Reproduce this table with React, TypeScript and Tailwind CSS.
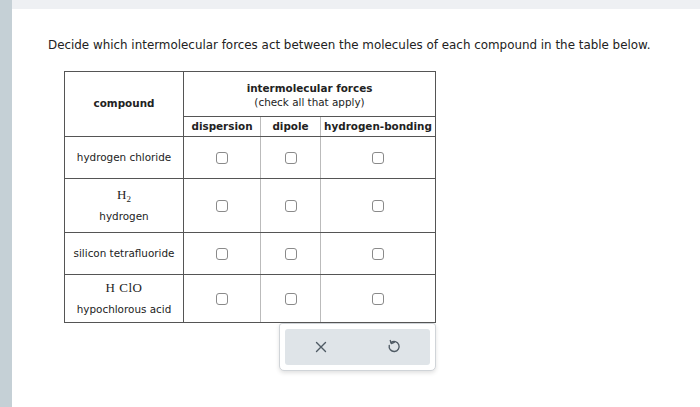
const rows = [
  { name: "hydrogen chloride" },
  { formula: "H2", name: "hydrogen" },
  { name: "silicon tetrafluoride" },
  { formula: "HClO", name: "hypochlorous acid" },
];

function Box() {
  return (
    <span className="inline-block h-[12px] w-[12px] rounded-[3px] border-[1.5px] border-[#8a8a8a] bg-white align-middle" />
  );
}

function Formula({ f }: { f: string }) {
  if (f === "H2") {
    return (
      <span className="font-['Liberation_Serif',serif] text-[13px] text-[#222]">
        H<sub className="text-[9px]">2</sub>
      </span>
    );
  }
  return (
    <span className="font-['Liberation_Serif',serif] text-[13px] tracking-[0.5px] text-[#222]">
      H ClO
    </span>
  );
}

function UndoIcon() {
  return (
    <svg width="15" height="16" viewBox="0 0 24 25" fill="none" stroke="#4f5a64" strokeWidth="2.2" strokeLinecap="round" strokeLinejoin="round">
      <path d="M8 5.5 A8 8 0 1 1 5.2 10" />
      <path d="M8 2 v5 h5" transform="rotate(-20 8 5.5)" />
    </svg>
  );
}

export default function App() {
  return (
    <div className="flex h-[407px] w-[700px] bg-white font-['DejaVu_Sans',sans-serif]">
      <div className="w-[12px] shrink-0 bg-[#c5d0d6]" />
      <div className="flex flex-1 flex-col">
        <div className="h-[9px] bg-[#eef0f3]" />
        <p className="ml-[36px] mt-[28px] text-[11.9px] text-[#222]">
          Decide which intermolecular forces act between the molecules of each compound in the table below.
        </p>

        <div className="ml-[52px] mt-[16px] flex flex-col">
          <table className="w-[372px] border-collapse text-[10.4px] text-[#222]">
            <thead>
              <tr className="h-[45px]">
                <th
                  rowSpan={2}
                  className="w-[119px] border-[1.5px] border-[#555] font-bold"
                >
                  compound
                </th>
                <th
                  colSpan={3}
                  className="border-[1.5px] border-[#555] pt-[2px] font-normal leading-[14px]"
                >
                  <div className="font-bold">intermolecular forces</div>
                  <div>(check all that apply)</div>
                </th>
              </tr>
              <tr className="h-[20px] whitespace-nowrap">
                <th className="w-[77px] border-b-[1.5px] border-b-[#555] border-r border-r-[#bbb] p-0 font-bold">
                  dispersion
                </th>
                <th className="w-[60px] border-b-[1.5px] border-b-[#555] border-r border-r-[#bbb] p-0 font-bold">
                  dipole
                </th>
                <th className="border-b-[1.5px] border-r-[1.5px] border-b-[#555] border-r-[#555] p-0 font-bold">
                  hydrogen-bonding
                </th>
              </tr>
            </thead>
            <tbody>
              {rows.map((r) => (
                <tr
                  key={r.name}
                  className={r.formula ? (r.formula === "H2" ? "h-[54px]" : "h-[48px]") : "h-[42px]"}
                >
                  <td className="whitespace-nowrap border-[1.5px] border-[#555] p-0 text-center">
                    {r.formula && (
                      <div className="mb-[6px] leading-[16px]">
                        <Formula f={r.formula} />
                      </div>
                    )}
                    <div className="leading-[14px]">{r.name}</div>
                  </td>
                  <td className="border-b-[1.5px] border-b-[#555] border-r border-r-[#bbb] p-0 text-center">
                    <Box />
                  </td>
                  <td className="border-b-[1.5px] border-b-[#555] border-r border-r-[#bbb] p-0 text-center">
                    <Box />
                  </td>
                  <td className="border-b-[1.5px] border-r-[1.5px] border-b-[#555] border-r-[#555] p-0 text-center">
                    <Box />
                  </td>
                </tr>
              ))}
            </tbody>
          </table>

          <div className="ml-[215px] w-[157px] rounded-b-[5px] rounded-t-[3px] border border-[#d0d4d8] bg-white p-[5px] shadow-[0_2px_4px_rgba(0,0,0,0.12)]">
            <div className="flex h-[36px] items-center justify-around rounded-[3px] bg-[#dfe4e8]">
              <svg width="12" height="12" viewBox="0 0 12 12" stroke="#4f5a64" strokeWidth="1.4" strokeLinecap="round">
                <path d="M1.5 1.5 L10.5 10.5 M10.5 1.5 L1.5 10.5" />
              </svg>
              <UndoIcon />
            </div>
          </div>
        </div>
      </div>
    </div>
  );
}
